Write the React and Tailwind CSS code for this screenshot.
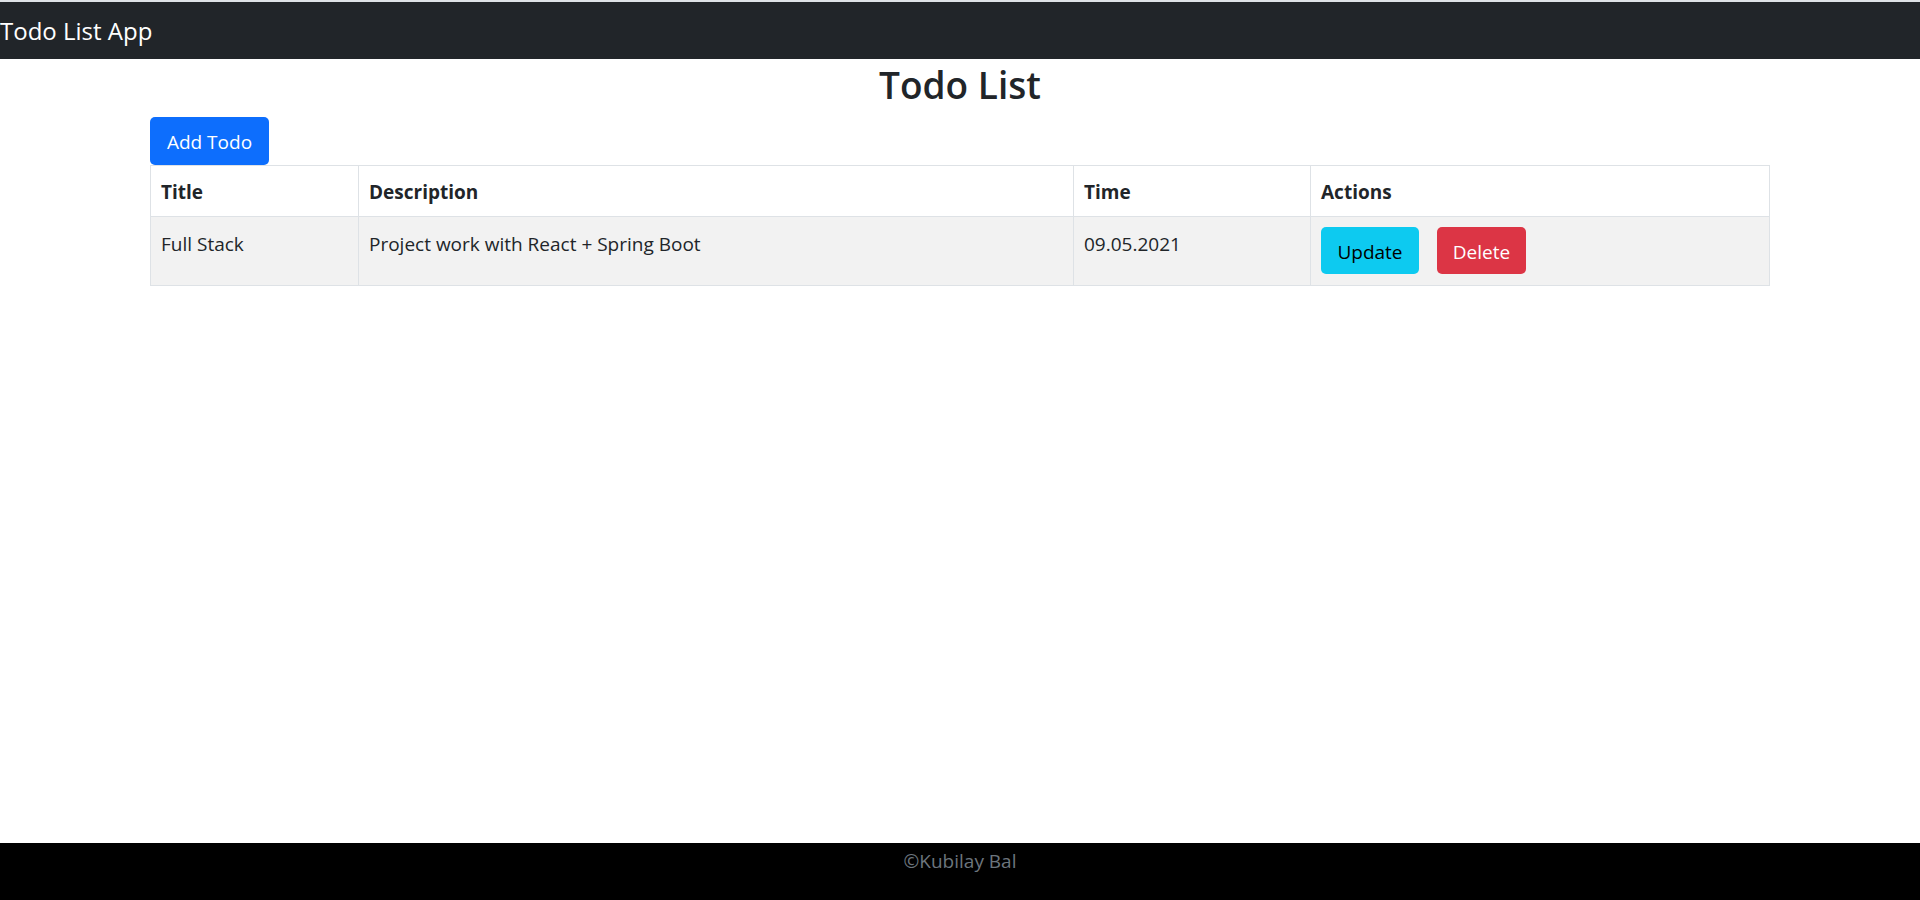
export default function App() {
  const th = "text-left font-bold pt-[11px] pb-[9px] px-[10px] border border-[#dee2e6]";
  const td = "pt-[12px] pb-[8px] px-[10px] border border-[#dee2e6]";
  return (
    <div className="min-h-[900px] flex flex-col bg-white text-[#212529] font-['Open_Sans',sans-serif]">
      <div className="h-[2px] bg-[#dee2e6]" />
      <nav className="h-[57px] bg-[#212529] flex items-center">
        <span className="text-[24px] leading-[37px] text-white pl-0">Todo List App</span>
      </nav>
      <main className="flex-1">
        <div className="w-[1620px] mx-auto">
          <h2 className="text-[37px] leading-[48px] pt-[2px] -mb-[2px] font-semibold text-center">Todo List</h2>
          <button className="mt-[10px] h-[48px] w-[119px] pt-[2px] rounded-[5px] bg-[#0d6efd] text-white text-[19px] leading-[30px]">Add Todo</button>
          <table className="w-full border-collapse border border-[#dee2e6] text-[19px] leading-[30px]">
            <thead>
              <tr className="bg-white">
                <th className={"w-[208px] " + th}>Title</th>
                <th className={"w-[715px] " + th}>Description</th>
                <th className={"w-[237px] " + th}>Time</th>
                <th className={th}>Actions</th>
              </tr>
            </thead>
            <tbody>
              <tr className="bg-[#f2f2f2] align-top">
                <td className={td}>Full Stack</td>
                <td className={td}>Project work with React + Spring Boot</td>
                <td className={td}>09.05.2021</td>
                <td className="pt-[10px] pb-[11px] px-[10px] border border-[#dee2e6]">
                  <div className="flex">
                    <button className="h-[47px] w-[98px] pt-[2px] rounded-[5px] bg-[#0dcaf0] text-black text-[19px]">Update</button>
                    <button className="ml-[18px] h-[47px] w-[89px] pt-[2px] rounded-[5px] bg-[#dc3545] text-white text-[19px]">Delete</button>
                  </div>
                </td>
              </tr>
            </tbody>
          </table>
        </div>
      </main>
      <footer className="h-[57px] bg-black text-center">
        <span className="text-[19px] leading-[30px] text-[#6c757d] inline-block pt-[3px]">©Kubilay Bal</span>
      </footer>
    </div>
  );
}
